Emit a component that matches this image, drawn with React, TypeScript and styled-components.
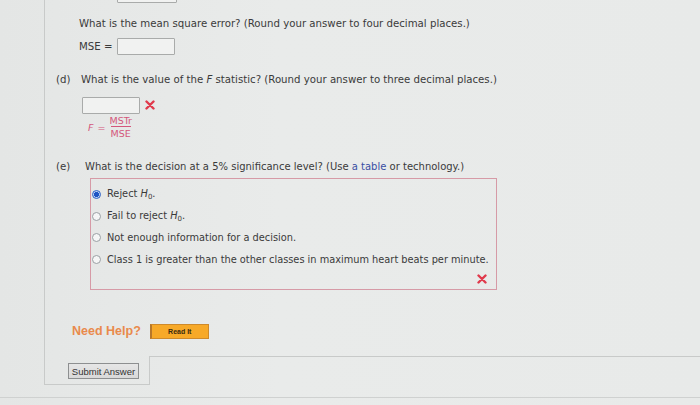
import React, { FC } from 'react';
import styled, { createGlobalStyle } from 'styled-components';

const GlobalStyle = createGlobalStyle`
  html, body {
    margin: 0;
    padding: 0;
    background: #e7e9e8;
  }
  body {
    font-family: 'DejaVu Sans', Verdana, sans-serif;
    font-size: 10.2px;
    color: #3a3a3a;
  }
`;

const Page = styled.div`
  width: 700px;
  height: 405px;
  overflow: hidden;
  background: linear-gradient(90deg, #e4e6e5 0%, #e9ebea 40%, #e8eae9 100%);
`;

const Sheet = styled.div`
  margin-left: 44px;
  border-left: 1px solid #c8cac9;
  padding-left: 11px;
`;

const Line = styled.div<{ $indent?: number; $size?: number }>`
  line-height: 14px;
  padding-left: ${(p) => p.$indent || 0}px;
  font-size: ${(p) => p.$size || 10.2}px;
  white-space: nowrap;
`;

const AnswerBox = styled.span<{ $w?: number }>`
  display: inline-block;
  width: ${(p) => p.$w || 58}px;
  height: 17px;
  box-sizing: border-box;
  background: #f1f2f1;
  border: 1px solid #a9abaa;
  border-radius: 1px;
`;

const PrevBox = styled(AnswerBox)`
  display: block;
  margin: -14px 0 0 61px;
`;

const Block = styled.div<{ $top: number }>`
  margin-top: ${(p) => p.$top}px;
`;

const InputRow = styled.div<{ $indent?: number; $top?: number }>`
  display: flex;
  align-items: center;
  gap: 5px;
  height: 18px;
  margin-top: ${(p) => p.$top || 0}px;
  padding-left: ${(p) => p.$indent || 0}px;
`;

const Part = styled.div`
  display: grid;
  grid-template-columns: 25px 1fr;
`;

const PartLabel = styled.div`
  line-height: 14px;
`;

const Wrong = styled.span<{ $size?: number }>`
  display: inline-flex;
  width: ${(p) => p.$size || 10}px;
  height: ${(p) => p.$size || 10}px;
`;

const Fraction = styled.div`
  display: flex;
  align-items: center;
  gap: 4px;
  margin: 1px 0 0 7px;
  color: #d4577b;
  font-size: 9.5px;
`;

const FracStack = styled.div`
  display: flex;
  flex-direction: column;
  align-items: center;
  line-height: 11px;
  span + span {
    border-top: 1px solid #d4577b;
    padding-top: 1px;
  }
`;

const Italic = styled.i`
  font-family: 'DejaVu Sans', sans-serif;
  font-style: italic;
`;

const LinkText = styled.span`
  color: #3a4fa3;
`;

const ChoiceBox = styled.div`
  width: 407px;
  height: 112px;
  box-sizing: border-box;
  margin: 4px 0 0 9px;
  border: 1px solid #d69aa6;
  padding-top: 5px;
  display: flex;
  flex-direction: column;
`;

const Choice = styled.div`
  display: flex;
  align-items: center;
  gap: 6px;
  height: 21.5px;
  padding-left: 1px;
  font-size: 9.8px;
  white-space: nowrap;
`;

const Radio = styled.span<{ $on?: boolean }>`
  width: 9px;
  height: 9px;
  border-radius: 50%;
  box-sizing: border-box;
  border: 1px solid ${(p) => (p.$on ? '#2c62c9' : '#9aa0a4')};
  background: ${(p) =>
    p.$on
      ? 'radial-gradient(circle, #1f55c4 0 2.3px, #b8cdf2 2.8px)'
      : '#f5f6f6'};
  flex: none;
`;

const Sub = styled.sub`
  font-size: 7px;
  font-style: normal;
  vertical-align: -2px;
`;

const ChoiceMark = styled.div`
  display: flex;
  justify-content: flex-end;
  padding: 4px 9px 0 0;
`;

const HelpRow = styled.div`
  display: flex;
  align-items: center;
  gap: 9px;
  margin: 32px 0 0 16px;
  height: 18px;
`;

const HelpLabel = styled.span`
  font-family: 'Liberation Sans', Arial, sans-serif;
  font-weight: bold;
  font-size: 12.5px;
  color: #e98a4c;
`;

const ReadIt = styled.span`
  width: 59px;
  height: 15px;
  box-sizing: border-box;
  display: flex;
  align-items: center;
  justify-content: center;
  background: #f7a928;
  border: 1px solid #cf8a2a;
  border-left: 2px solid #b7772a;
  font-family: 'Liberation Sans', Arial, sans-serif;
  font-weight: bold;
  font-size: 7px;
  color: #3a2a10;
`;

const Footer = styled.div`
  display: flex;
  align-items: flex-start;
  margin-top: 16px;
  margin-left: -11px;
`;

const SubmitTab = styled.div`
  width: 105px;
  height: 29px;
  box-sizing: border-box;
  border-right: 1px solid #c8cac9;
  border-bottom: 1px solid #c8cac9;
  padding: 7px 0 0 23px;
`;

const FooterRule = styled.div`
  flex: 1;
  border-top: 1px solid #c8cac9;
`;

const SubmitButton = styled.button`
  display: block;
  width: 71px;
  height: 16px;
  padding: 0;
  box-sizing: border-box;
  background: linear-gradient(#e6e6e6, #d9d9d9);
  border: 1px solid #8d8f90;
  font-family: 'Liberation Sans', Arial, sans-serif;
  font-size: 9.5px;
  color: #333;
`;

const BottomRule = styled.div`
  margin-top: 12px;
  border-top: 1px solid #cfd1d0;
`;

const XMark: FC<{ size?: number }> = ({ size = 10 }) => (
  <Wrong $size={size}>
    <svg width={size} height={size} viewBox="0 0 10 10">
      <path
        d="M1.5 1.5 L8.5 8.5 M8.5 1.5 L1.5 8.5"
        stroke="#e03a4c"
        strokeWidth="2.4"
        strokeLinecap="round"
      />
    </svg>
  </Wrong>
);

const H0: FC = () => (
  <>
    <Italic>H</Italic>
    <Sub>0</Sub>.
  </>
);

const choices = [
  { key: 'reject', on: true, text: <>Reject <H0 /></> },
  { key: 'fail', on: false, text: <>Fail to reject <H0 /></> },
  { key: 'info', on: false, text: <>Not enough information for a decision.</> },
  {
    key: 'class',
    on: false,
    text: <>Class 1 is greater than the other classes in maximum heart beats per minute.</>,
  },
];

const App: FC = () => (
  <Page>
    <GlobalStyle />
    <Sheet>
      <PrevBox $w={60} />
      <Block $top={14}>
        <Line $indent={23}>
          What is the mean square error? (Round your answer to four decimal places.)
        </Line>
        <InputRow $indent={23} $top={6}>
          MSE = <AnswerBox $w={58} />
        </InputRow>
      </Block>

      <Block $top={18}>
        <Part>
          <PartLabel>(d)</PartLabel>
          <div>
            <Line>
              What is the value of the <Italic>F</Italic> statistic? (Round your answer to three
              decimal places.)
            </Line>
            <InputRow $indent={1} $top={9}>
              <AnswerBox $w={58} />
              <XMark />
            </InputRow>
            <Fraction>
              <Italic>F</Italic> =
              <FracStack>
                <span>MSTr</span>
                <span>MSE</span>
              </FracStack>
            </Fraction>
          </div>
        </Part>
      </Block>

      <Block $top={21}>
        <Part>
          <PartLabel>(e)</PartLabel>
          <div>
            <Line $indent={4} $size={10}>
              What is the decision at a 5% significance level? (Use <LinkText>a table</LinkText>{' '}
              or technology.)
            </Line>
            <ChoiceBox>
              {choices.map((c) => (
                <Choice key={c.key}>
                  <Radio $on={c.on} />
                  <span>{c.text}</span>
                </Choice>
              ))}
              <ChoiceMark>
                <XMark />
              </ChoiceMark>
            </ChoiceBox>
          </div>
        </Part>
      </Block>

      <HelpRow>
        <HelpLabel>Need Help?</HelpLabel>
        <ReadIt>Read It</ReadIt>
      </HelpRow>

      <Footer>
        <SubmitTab>
          <SubmitButton>Submit Answer</SubmitButton>
        </SubmitTab>
        <FooterRule />
      </Footer>
    </Sheet>
    <BottomRule />
  </Page>
);

export default App;
